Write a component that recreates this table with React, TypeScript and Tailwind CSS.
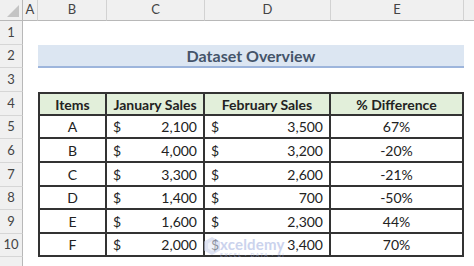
const rows = [
  { item: "A", jan: "2,100", feb: "3,500", diff: "67%" },
  { item: "B", jan: "4,000", feb: "3,200", diff: "-20%" },
  { item: "C", jan: "3,300", feb: "2,600", diff: "-21%" },
  { item: "D", jan: "1,400", feb: "700", diff: "-50%" },
  { item: "E", jan: "1,600", feb: "2,300", diff: "44%" },
  { item: "F", jan: "2,000", feb: "3,400", diff: "70%" },
];

function RowHead({ n }: { n: number }) {
  return (
    <div className="flex items-center justify-center bg-[#f0f0f0] border-r border-b border-r-[#b8b8b8] border-b-[#d6d6d6] text-[13px] text-[#444]">
      {n}
    </div>
  );
}

function ColHead({ label }: { label: string }) {
  return (
    <div className="flex items-center justify-center bg-[#f0f0f0] border-r border-b border-r-[#d2d2d2] border-b-[#b8b8b8] text-[13px] text-[#444]">
      {label}
    </div>
  );
}

export default function App() {
  return (
    <div className="relative w-[474px] h-[266px] overflow-hidden bg-white font-['Lato',sans-serif] text-[#222]">
      <div className="grid h-full grid-cols-[23px_15px_69px_98px_126px_133px_1fr] grid-rows-[21px_24px_23px_24px_24px_23px_24px_24px_23px_24px_23px_1fr]">
        {/* column header */}
        <div className="relative bg-[#f0f0f0] border-r border-b border-r-[#b8b8b8] border-b-[#b8b8b8]">
          <svg className="absolute right-[3px] bottom-[3px]" width="12" height="12" viewBox="0 0 12 12">
            <path d="M12 0 L12 12 L0 12 Z" fill="#c4c4c4" />
          </svg>
        </div>
        <ColHead label="A" />
        <ColHead label="B" />
        <ColHead label="C" />
        <ColHead label="D" />
        <ColHead label="E" />
        <div className="bg-[#f0f0f0] border-b border-b-[#b8b8b8]" />

        {/* row 1 */}
        <RowHead n={1} />
        <div className="col-span-6" />

        {/* row 2 */}
        <RowHead n={2} />
        <div />
        <div className="col-span-4 flex items-center justify-center bg-[#dce6f2] border-b-2 border-b-[#9db5dc] pt-[1px] text-[16px] font-bold text-[#44546a]">
          Dataset Overview
        </div>
        <div />

        {/* row 3 */}
        <RowHead n={3} />
        <div className="col-span-6" />

        {/* row 4 header */}
        <RowHead n={4} />
        <div />
        <div className="flex items-center justify-center bg-[#e2efda] border-2 border-[#333] text-[14px] font-bold">
          Items
        </div>
        <div className="flex items-center justify-center bg-[#e2efda] border-y-2 border-r-2 border-[#333] text-[14px] font-bold">
          January Sales
        </div>
        <div className="flex items-center justify-center bg-[#e2efda] border-y-2 border-r-2 border-[#333] text-[14px] font-bold">
          February Sales
        </div>
        <div className="flex items-center justify-center bg-[#e2efda] border-y-2 border-r-2 border-[#333] text-[14px] font-bold">
          % Difference
        </div>
        <div />

        {rows.map((r, i) => (
          <div key={r.item} className="contents">
            <RowHead n={i + 5} />
            <div />
            <div className="flex items-center justify-center border-x-2 border-b-2 border-[#333] text-[14px]">
              {r.item}
            </div>
            <div className="flex items-center justify-between border-r-2 border-b-2 border-[#333] pl-[6px] pr-[6px] text-[14px]">
              <span>$</span>
              <span>{r.jan}</span>
            </div>
            <div className="flex items-center justify-between border-r-2 border-b-2 border-[#333] pl-[6px] pr-[6px] text-[14px]">
              <span>$</span>
              <span>{r.feb}</span>
            </div>
            <div className="flex items-center justify-center border-r-2 border-b-2 border-[#333] text-[14px]">
              {r.diff}
            </div>
            <div />
          </div>
        ))}

        {/* row 11 */}
        <div className="bg-[#f0f0f0] border-r border-r-[#b8b8b8]" />
        <div className="col-span-6" />
      </div>

      {/* watermark */}
      <svg
        width="16"
        height="18"
        viewBox="0 0 16 18"
        className="pointer-events-none absolute left-[204px] top-[237px] opacity-60"
      >
        <path d="M8 0 L16 4.5 L16 13.5 L8 18 L0 13.5 L0 4.5 Z" fill="#c9d2ec" />
        <path d="M8 4 L12 6.5 L12 11.5 L8 14 L4 11.5 L4 6.5 Z" fill="#e6ebf7" />
      </svg>
      <div className="pointer-events-none absolute left-[220px] top-[237px] flex flex-col leading-none opacity-60">
        <span className="text-[15px] font-bold tracking-[0.2px] text-[#a9b6e2]">xceldemy</span>
        <span className="mt-[1px] text-[5px] tracking-[1.5px] text-[#a9b6e2]">EXCEL · DATA · BI</span>
      </div>
    </div>
  );
}
